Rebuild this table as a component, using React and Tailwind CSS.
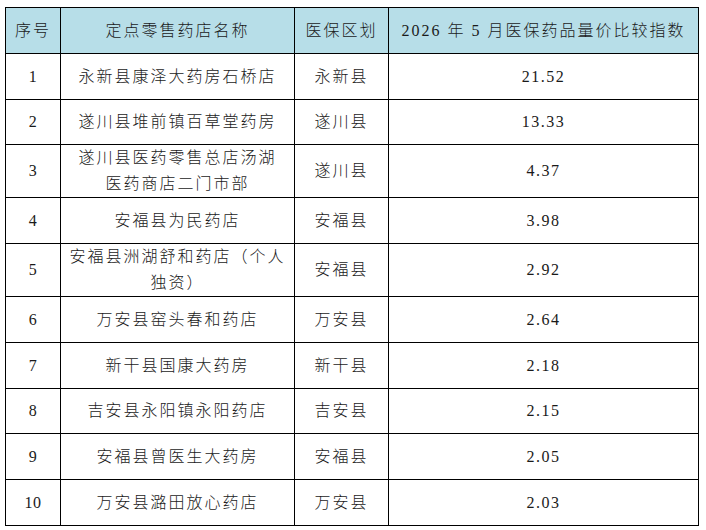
import React from "react";

const rows = [
  ["1", "永新县康泽大药房石桥店", "永新县", "21.52"],
  ["2", "遂川县堆前镇百草堂药房", "遂川县", "13.33"],
  ["3", ["遂川县医药零售总店汤湖", "医药商店二门市部"], "遂川县", "4.37"],
  ["4", "安福县为民药店", "安福县", "3.98"],
  ["5", ["安福县洲湖舒和药店（个人", "独资）"], "安福县", "2.92"],
  ["6", "万安县窑头春和药店", "万安县", "2.64"],
  ["7", "新干县国康大药房", "新干县", "2.18"],
  ["8", "吉安县永阳镇永阳药店", "吉安县", "2.15"],
  ["9", "安福县曾医生大药房", "安福县", "2.05"],
  ["10", "万安县潞田放心药店", "万安县", "2.03"],
];

export default function App() {
  const font = { fontFamily: '"Liberation Serif", "Noto Sans CJK SC", serif' };
  const cell = "bg-white flex items-center justify-center text-center";
  const head = "bg-[#b7dee8] flex items-center justify-center text-center tracking-[2px]";
  return (
    <div className="w-[706px] h-[530px] bg-white pl-[5px] pt-[7px] text-[#1a1a1a] text-[16px] font-light" style={font}>
      <div className="grid w-[694px] grid-cols-[54px_233px_93px_309px] grid-rows-[45px_45px_44px_52px_45px_52px_45px_45px_44px_45px_45px] gap-px bg-black border border-black">
        <div className={head}>序号</div>
        <div className={head}>定点零售药店名称</div>
        <div className={head}>医保区划</div>
        <div className={head}>2026 年 5 月医保药品量价比较指数</div>
        {rows.map((r) => (
          <React.Fragment key={r[0]}>
            <div className={cell + " tracking-[0.5px]"}>{r[0]}</div>
            <div className={cell + " tracking-[2px] leading-[26px]"}>
              {Array.isArray(r[1]) ? (
                <span>
                  {r[1][0]}
                  <br />
                  {r[1][1]}
                </span>
              ) : (
                r[1]
              )}
            </div>
            <div className={cell + " tracking-[2px]"}>{r[2]}</div>
            <div className={cell + " tracking-[1.5px]"}>{r[3]}</div>
          </React.Fragment>
        ))}
      </div>
    </div>
  );
}
